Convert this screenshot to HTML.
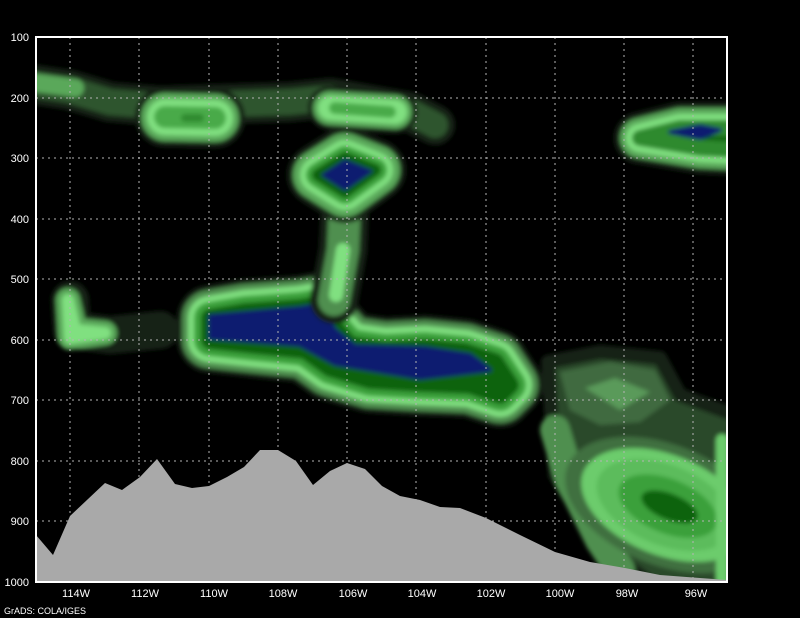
<!DOCTYPE html>
<html><head><meta charset="utf-8"><style>
html,body{margin:0;padding:0;background:#000;width:800px;height:618px;overflow:hidden}
svg{display:block}
text{font-family:"Liberation Sans",sans-serif;font-size:11px;fill:#fff}
</style></head><body>
<svg width="800" height="618" viewBox="0 0 800 618" xmlns="http://www.w3.org/2000/svg">
<defs>
<filter id="b" x="-10%" y="-10%" width="120%" height="120%"><feGaussianBlur stdDeviation="2"/></filter>
<clipPath id="c"><rect x="36" y="37" width="691" height="545"/></clipPath>
</defs>
<rect width="800" height="618" fill="#000"/>
<g clip-path="url(#c)" filter="url(#b)" stroke-linejoin="round" stroke-linecap="round" fill="none">
<!-- dim top band -->
<path d="M30,84 L70,90 L110,102 L160,106 L290,102 L330,98 L410,112 L435,125" stroke="#142414" stroke-width="40"/>
<path d="M30,84 L70,90 L110,102 L160,106 L290,102 L330,98 L410,112 L435,125" stroke="#2f552f" stroke-width="26"/>
<path d="M30,82 L75,88" stroke="#5aa85a" stroke-width="18"/>
<!-- top blob C -->
<path d="M165,117 L215,118" stroke="#142414" stroke-width="60"/>
<path d="M165,117 L215,118" stroke="#5aa85a" stroke-width="48"/>
<path d="M165,117 L215,118" stroke="#80e080" stroke-width="36"/>
<path d="M165,117 L215,118" stroke="#4aaa4a" stroke-width="22"/>
<path d="M185,118 L200,118" stroke="#2e8a2e" stroke-width="8"/>
<!-- top blob D -->
<path d="M330,108 L395,112" stroke="#142414" stroke-width="44"/>
<path d="M330,108 L395,112" stroke="#5aa85a" stroke-width="34"/>
<path d="M330,108 L395,112" stroke="#80e080" stroke-width="24"/>
<path d="M335,108 L390,112" stroke="#4aaa4a" stroke-width="12"/>
<!-- right top F -->
<path d="M640,138 L680,128 L740,128 L740,150 L700,148 Z" stroke="#142414" stroke-width="52"/>
<path d="M640,138 L680,128 L740,128 L740,150 L700,148 Z" stroke="#5aa85a" stroke-width="40"/>
<path d="M640,138 L680,128 L740,128 L740,150 L700,148 Z" stroke="#80e080" stroke-width="28"/>
<path d="M640,138 L680,128 L740,128 L740,150 L700,148 Z" fill="#0a640a" stroke="#2e8a2e" stroke-width="16"/>
<path d="M670,132 L700,126 L720,130 L700,138 Z" fill="#0b1a70" stroke="#0b1a70" stroke-width="4"/>
<!-- lower right -->
<path d="M548,362 L600,352 L660,358 L680,395 L735,415 L735,590 L660,590 L600,545 L555,475 Z" fill="#2a4a2a" stroke="#142414" stroke-width="14"/>
<path d="M560,372 L610,362 L655,370 L670,400 L640,422 L600,425 L570,410 Z" fill="#3f6a3f"/>
<path d="M585,388 L615,378 L650,392 L620,410 Z" fill="#5a9a5a"/>
<path d="M555,430 L570,480 L600,540 L620,570" stroke="#4f8f4f" stroke-width="30"/>
<g transform="rotate(22 665 505)">
<ellipse cx="665" cy="505" rx="105" ry="60" fill="#3f6f3f"/>
<ellipse cx="665" cy="505" rx="88" ry="50" fill="#6ccc6c"/>
<ellipse cx="665" cy="505" rx="72" ry="40" fill="#5cbc5c"/>
<ellipse cx="668" cy="505" rx="52" ry="27" fill="#3aa03a"/>
<ellipse cx="670" cy="505" rx="30" ry="13" fill="#0a640a"/>
</g>
<path d="M722,440 L722,580" stroke="#6ccc6c" stroke-width="12"/>
<!-- big band A -->
<path d="M210,318 L245,312 L300,308 L318,305 L332,325 L350,345 L385,350 L425,348 L465,352 L495,362 L510,385 L500,395 L470,385 L420,383 L370,380 L330,368 L305,350 L255,345 L210,340 Z" fill="#0b1a70" stroke="#142414" stroke-width="66"/>
<path d="M210,318 L245,312 L300,308 L318,305 L332,325 L350,345 L385,350 L425,348 L465,352 L495,362 L510,385 L500,395 L470,385 L420,383 L370,380 L330,368 L305,350 L255,345 L210,340 Z" stroke="#4f8f4f" stroke-width="56"/>
<path d="M210,318 L245,312 L300,308 L318,305 L332,325 L350,345 L385,350 L425,348 L465,352 L495,362 L510,385 L500,395 L470,385 L420,383 L370,380 L330,368 L305,350 L255,345 L210,340 Z" stroke="#80e080" stroke-width="44"/>
<path d="M210,318 L245,312 L300,308 L318,305 L332,325 L350,345 L385,350 L425,348 L465,352 L495,362 L510,385 L500,395 L470,385 L420,383 L370,380 L330,368 L305,350 L255,345 L210,340 Z" stroke="#3aa03a" stroke-width="32"/>
<path d="M210,318 L245,312 L300,308 L318,305 L332,325 L350,345 L385,350 L425,348 L465,352 L495,362 L510,385 L500,395 L470,385 L420,383 L370,380 L330,368 L305,350 L255,345 L210,340 Z" fill="#0a640a" stroke="#0a640a" stroke-width="18"/>
<path d="M210,316 L300,308 L318,305 L335,330 L355,346 L425,348 L470,355 L490,370 L420,378 L335,364 L300,345 L210,338 Z" fill="#0b1a70" stroke="#0b1a70" stroke-width="4"/>
<!-- stem -->
<path d="M334,300 L343,250 L345,205" stroke="#142414" stroke-width="48"/>
<path d="M334,300 L343,250 L345,205" stroke="#4f8f4f" stroke-width="32"/>
<path d="M336,295 L343,250" stroke="#80e080" stroke-width="14"/>
<!-- left small G -->
<path d="M70,300 L72,330 L110,335 L160,330" stroke="#142414" stroke-width="38"/>
<path d="M68,300 L75,330 L105,333 L70,338 Z" fill="#4aaa4a" stroke="#5aa85a" stroke-width="24"/>
<path d="M68,300 L75,330 L105,333 L70,338 Z" stroke="#80e080" stroke-width="12"/>
<!-- diamond B -->
<path d="M318,175 L345,158 L375,170 L345,192 Z" stroke="#142414" stroke-width="62"/>
<path d="M318,175 L345,158 L375,170 L345,192 Z" stroke="#5aa85a" stroke-width="50"/>
<path d="M318,175 L345,158 L375,170 L345,192 Z" stroke="#80e080" stroke-width="36"/>
<path d="M318,175 L345,158 L375,170 L345,192 Z" stroke="#3aa03a" stroke-width="24"/>
<path d="M318,175 L345,158 L375,170 L345,192 Z" fill="#0a640a" stroke="#0a640a" stroke-width="12"/>
<path d="M322,175 L345,160 L372,171 L345,190 Z" fill="#0b1a70" stroke="#0b1a70" stroke-width="2"/>
</g>
<!-- grid -->
<g stroke="#b4b4b4" stroke-width="1" stroke-dasharray="2,4">
<path d="M70,37V582M139,37V582M209,37V582M278,37V582M347,37V582M416,37V582M486,37V582M555,37V582M624,37V582M693,37V582"/>
<path d="M36,98H727M36,158H727M36,219H727M36,279H727M36,340H727M36,400H727M36,461H727M36,521H727"/>
</g>
<!-- terrain -->
<path d="M36,535 L53,555 L70,516 L105,483 L122,490 L140,477 L157,459 L175,484 L192,488 L209,486 L227,477 L244,467 L260,450 L278,450 L296,461 L313,485 L330,471 L347,463 L365,469 L382,486 L400,496 L420,500 L440,507 L460,508 L486,518 L520,535 L555,552 L590,562 L625,568 L660,575 L700,578 L727,580 L727,583 L36,583 Z" fill="#a9a9a9"/>
<!-- frame -->
<rect x="36" y="37" width="691" height="545" fill="none" stroke="#fff" stroke-width="2"/>
<g text-anchor="end">
<text x="29" y="41">100</text><text x="29" y="102">200</text><text x="29" y="162">300</text>
<text x="29" y="223">400</text><text x="29" y="283">500</text><text x="29" y="344">600</text>
<text x="29" y="404">700</text><text x="29" y="465">800</text><text x="29" y="525">900</text>
<text x="29" y="586">1000</text>
</g>
<g text-anchor="middle">
<text x="76" y="597">114W</text><text x="145" y="597">112W</text><text x="214" y="597">110W</text>
<text x="283" y="597">108W</text><text x="353" y="597">106W</text><text x="422" y="597">104W</text>
<text x="491" y="597">102W</text><text x="560" y="597">100W</text><text x="627" y="597">98W</text>
<text x="696" y="597">96W</text>
</g>
<text x="4" y="614" style="font-size:9px">GrADS: COLA/IGES</text>
</svg>
</body></html>
